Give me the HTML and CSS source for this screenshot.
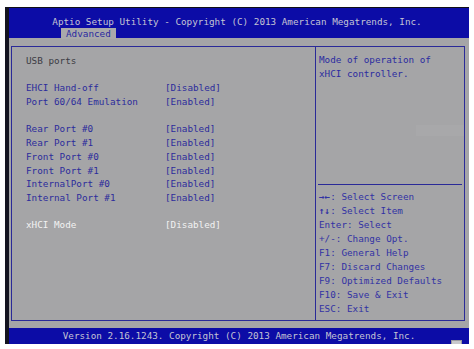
FILE: index.html
```html
<!DOCTYPE html>
<html>
<head>
    <meta charset="utf-8">
    <title>Aptio Setup Utility</title>
    <link rel="stylesheet" href="styles.css">
</head>

<body>

    <div class="screen">

        <!-- 顶部标题和选项卡 -->
        <div class="head">
            <div class="title">Aptio Setup Utility - Copyright (C) 2013 American Megatrends, Inc.</div>
            <div class="tabs"><span class="tab">Advanced</span></div>
        </div>

        <div class="main">
            <div class="box">

                <div class="left">
                    <div class="row sub">USB ports</div>
                    <div class="row"></div>
                    <div class="row"><span class="lbl">EHCI Hand-off</span><span>[Disabled]</span></div>
                    <div class="row"><span class="lbl">Port 60/64 Emulation</span><span>[Enabled]</span></div>
                    <div class="row"></div>
                    <div class="row"><span class="lbl">Rear Port #0</span><span>[Enabled]</span></div>
                    <div class="row"><span class="lbl">Rear Port #1</span><span>[Enabled]</span></div>
                    <div class="row"><span class="lbl">Front Port #0</span><span>[Enabled]</span></div>
                    <div class="row"><span class="lbl">Front Port #1</span><span>[Enabled]</span></div>
                    <div class="row"><span class="lbl">InternalPort #0</span><span>[Enabled]</span></div>
                    <div class="row"><span class="lbl">Internal Port #1</span><span>[Enabled]</span></div>
                    <div class="row"></div>
                    <div class="row sel"><span class="lbl">xHCI Mode</span><span>[Disabled]</span></div>
                </div>

                <div class="right">
                    <div class="desc">Mode of operation of<br>xHCI controller.</div>
                    <div class="keys">
                        <div><b>→←</b>: Select Screen</div>
                        <div><b>↑↓</b>: Select Item</div>
                        <div>Enter: Select</div>
                        <div>+/-: Change Opt.</div>
                        <div>F1: General Help</div>
                        <div>F7: Discard Changes</div>
                        <div>F9: Optimized Defaults</div>
                        <div>F10: Save &amp; Exit</div>
                        <div>ESC: Exit</div>
                    </div>
                    <span class="glare"></span>
                </div>

            </div>
        </div>

        <div class="foot">Version 2.16.1243. Copyright (C) 2013 American Megatrends, Inc.</div>

        <span class="corner"></span>
    </div>

</body>
</html>
```

FILE: styles.css
```css
*{box-sizing:border-box;  margin:0;  padding:0;  }
body{background:#fff;  font:9.3px/13.7px 'DejaVu Sans Mono','Liberation Mono',monospace;  }

.screen{position:relative;  width:464px;  margin:7px 0 0 5px;  border-top:1px solid #101018;  border-left:4px solid #141420;  }

.head{height:30px;  background:#0c0ca6;  }
.title{height:19px;  padding-top:8px;  line-height:12px;  color:#c4c4d4;  text-align:center;  padding-right:4px;  }
.tabs{height:11px;  padding-left:52px;  }
.tab{display:inline-block;  height:11px;  line-height:11px;  padding:0 5px;  background:#a9a9ab;  color:#2a2aa0;  }

.main{background:#a5a5a7;  padding:8px 4px 7px 2px;  }
.box{display:flex;  height:275px;  border:1px solid #2a2a98;  }

.left{width:303px;  padding:7px 0 0 14px;  color:#2c2c9c;  }
.row{display:flex;  height:13.7px;  white-space:pre;  }
.lbl{width:139px;  }
.sub{color:#3c3c44;  }
.sel{color:#f2f2f2;  }

.right{position:relative;  flex:1;  display:flex;  flex-direction:column;  justify-content:space-between;  border-left:1px solid #2a2a98;  padding:6px 0 4px 3px;  color:#2c2ca0;  line-height:14px;  }
.keys{border-top:1px solid #2a2a98;  margin:0 2px 0 -1px;  padding:5px 0 0 1px;  color:#3232a4;  }
.keys b{font-weight:bold;  }

.glare{position:absolute;  left:100px;  top:78px;  width:48px;  height:11px;  background:#b0b0b2;  opacity:0.35;  }

.foot{height:16px;  line-height:16px;  background:#0c0ca6;  color:#c4c4d4;  text-align:center;  }

.corner{position:absolute;  left:442px;  top:332px;  width:11px;  height:9px;  background:#c8c8cc;  border:1px solid #9a9aa0;  }
```
